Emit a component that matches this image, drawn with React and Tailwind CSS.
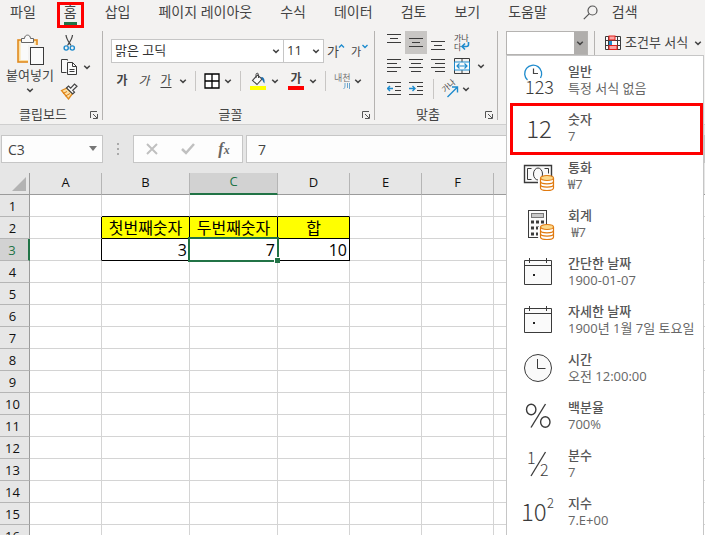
import { useState } from "react";

const TABS = ["파일", "홈", "삽입", "페이지 레이아웃", "수식", "데이터", "검토", "보기", "도움말"];

const COLUMNS = ["A", "B", "C", "D", "E", "F", "G", "H", "I"];
const ROWS = Array.from({ length: 16 }, (_, i) => i + 1);

const CELLS = {
  B2: "첫번째숫자",
  C2: "두번째숫자",
  D2: "합",
  B3: "3",
  C3: "7",
  D3: "10",
};

const FORMATS = [
  { name: "일반", sample: "특정 서식 없음", icon: GeneralIcon },
  { name: "숫자", sample: "7", icon: NumberIcon, marked: true },
  { name: "통화", sample: "₩7", icon: CurrencyIcon },
  { name: "회계", sample: "\u00a0₩7", icon: AccountingIcon },
  { name: "간단한 날짜", sample: "1900-01-07", icon: CalendarIcon },
  { name: "자세한 날짜", sample: "1900년 1월 7일 토요일", icon: CalendarIcon },
  { name: "시간", sample: "오전 12:00:00", icon: ClockIcon },
  { name: "백분율", sample: "700%", icon: PercentIcon },
  { name: "분수", sample: "7", icon: FractionIcon },
  { name: "지수", sample: "7.E+00", icon: ExponentIcon },
];

/* ---------- format menu icons ---------- */

function GeneralIcon() {
  return (
    <svg className="overflow-visible" width="32" height="32" viewBox="0 0 32 32" fill="none">
      <path d="M4.500 16A8.500 8.500 0 1 1 17.500 14" stroke="#1e8bcd" strokeWidth="1.300" />
      <path d="M10.500 4.500v5h4.500" stroke="#444" strokeWidth="1.200" />
      <text x="2" y="30" fontSize="18" fontWeight="300" fill="#3b3b3b">
        123
      </text>
    </svg>
  );
}

function NumberIcon() {
  return <span className="text-2xl font-light text-[#3b3b3b]">12</span>;
}

function Coins({ x, y }) {
  return (
    <g transform={`translate(${x} ${y})`}>
      <path d="M0 3v10c0 1.600 3 3 7 3s7-1.400 7-3V3" fill="#fff" stroke="#fff" strokeWidth="4" />
      <path
        d="M.5 3v10c0 1.600 3 2.500 6.500 2.500s6.500-.9 6.500-2.500V3"
        fill="#fff"
        stroke="#e07a10"
        strokeWidth="1.200"
      />
      <path
        d="M.5 6.500c0 1.500 3 2.300 6.500 2.300s6.500-.8 6.500-2.300M.5 9.800c0 1.500 3 2.300 6.500 2.300s6.500-.8 6.500-2.300"
        fill="none"
        stroke="#e07a10"
        strokeWidth="1.200"
      />
      <ellipse cx="7" cy="3" rx="6.500" ry="2.500" fill="#fbd98b" stroke="#e07a10" strokeWidth="1.200" />
    </g>
  );
}

function CurrencyIcon() {
  return (
    <svg width="32" height="32" viewBox="0 0 32 32" fill="none">
      <path d="M1.500 5.500h27v17h-27z" fill="#fafafa" stroke="#3b3b3b" strokeWidth="1.400" />
      <path d="M8.500 8.500h-4v11h4M21.500 8.500h4v5" stroke="#3b3b3b" />
      <ellipse cx="15" cy="14" rx="4.500" ry="6" stroke="#3b3b3b" />
      <Coins x="17" y="15" />
    </svg>
  );
}

function AccountingIcon() {
  return (
    <svg width="32" height="32" viewBox="0 0 32 32" fill="none">
      <rect x="5.500" y="2.500" width="18" height="27" fill="#fafafa" stroke="#3b3b3b" />
      <rect x="8.500" y="5.500" width="12" height="4" fill="#c8c8c8" stroke="#777" />
      <path
        d="M8 12.500h3v3H8zM13 12.500h3v3h-3zM18 12.500h3v3h-3zM8 18.500h3v3H8zM13 18.500h3v3h-3zM8 24.500h3v3H8zM13 24.500h3v3h-3z"
        fill="#3b3b3b"
      />
      <Coins x="17" y="16" />
    </svg>
  );
}

function CalendarIcon() {
  return (
    <svg width="32" height="32" viewBox="0 0 32 32" fill="none">
      <path d="M1.500 4.500h27v24h-27z" fill="#fafafa" stroke="#3b3b3b" />
      <path d="M1.500 9.500h27M6.500 2v5M23.500 2v5" stroke="#3b3b3b" />
      <rect x="10" y="18" width="2" height="2" fill="#222" />
    </svg>
  );
}

function ClockIcon() {
  return (
    <svg width="32" height="32" viewBox="0 0 32 32" fill="none">
      <circle cx="15" cy="16" r="13.500" fill="#fafafa" stroke="#3b3b3b" />
      <path d="M14.500 7v9.500h8" stroke="#3b3b3b" />
    </svg>
  );
}

function PercentIcon() {
  return (
    <svg width="32" height="32" viewBox="0 0 32 32" fill="none" stroke="#3b3b3b" strokeWidth="1.400">
      <ellipse cx="8.200" cy="9.500" rx="4.700" ry="5.200" />
      <ellipse cx="22.300" cy="22" rx="4.700" ry="5.200" />
      <path d="M22.500 4 8 27.500" />
    </svg>
  );
}

function FractionIcon() {
  return (
    <svg className="overflow-visible" width="32" height="32" viewBox="0 0 32 32" fill="none">
      <text x="4" y="16" fontSize="16" fontWeight="300" fill="#3b3b3b">
        1
      </text>
      <text x="17" y="28" fontSize="16" fontWeight="300" fill="#3b3b3b">
        2
      </text>
      <path d="M22.500 4 8 28" stroke="#3b3b3b" strokeWidth="1.300" />
    </svg>
  );
}

function ExponentIcon() {
  return (
    <svg className="overflow-visible" width="32" height="32" viewBox="0 0 32 32" fill="none">
      <text x="-2" y="25" fontSize="24" fontWeight="300" fill="#3b3b3b">
        10
      </text>
      <text x="24" y="12" fontSize="13" fontWeight="300" fill="#3b3b3b">
        2
      </text>
    </svg>
  );
}

/* ---------- ribbon icons ---------- */

function Chevron({ className = "" }) {
  return (
    <svg className={className} width="12" height="12" viewBox="0 0 12 12" fill="none">
      <path d="M3.200 4.800 6 7.400l2.800-2.600" stroke="#444" strokeWidth="1.500" />
    </svg>
  );
}

function Launcher() {
  return (
    <svg width="10" height="10" viewBox="0 0 10 10" fill="none" stroke="#555">
      <path d="M1.500 8V1.500H8M4 4l4 4M8.500 4v4.500H4" />
    </svg>
  );
}

function PasteIcon() {
  return (
    <svg width="28" height="32" viewBox="0 0 28 32" fill="none">
      <rect x="2" y="6" width="19" height="22" fill="#fbe0a6" stroke="#e08a1e" strokeWidth="1.600" />
      <rect x="4.500" y="8" width="14" height="18" fill="#fafafa" />
      <path d="M5.500 8.500v-4H8.500C8.500 0 14.500 0 14.500 4.500h3v4z" fill="#fafafa" stroke="#666" />
      <rect x="12" y="11" width="16" height="21" fill="#f3f2f1" />
      <rect x="14.500" y="13.500" width="13" height="17" fill="#fafafa" stroke="#3b3b3b" />
    </svg>
  );
}

function CutIcon() {
  return (
    <svg width="16" height="18" viewBox="0 0 16 18" fill="none">
      <path d="M5 1c.3 4 3 7.500 5 10.500M11.500 1c-.3 4-3 7.500-5 10.500" stroke="#444" strokeWidth="1.200" />
      <circle cx="5.200" cy="14" r="2.100" stroke="#1e8bcd" strokeWidth="1.400" />
      <circle cx="11.300" cy="14" r="2.100" stroke="#1e8bcd" strokeWidth="1.400" />
    </svg>
  );
}

function CopyIcon() {
  return (
    <svg width="18" height="18" viewBox="0 0 18 18" fill="none" stroke="#3b3b3b">
      <path d="M7.500 2.500V1.500h-6v13h5" fill="#fafafa" />
      <path d="M7.500 4.500h5l4 4v8h-9z" fill="#fafafa" />
      <path d="M12.500 4.500v4h4M9.500 11.500h5M9.500 13.500h5" />
    </svg>
  );
}

function BrushIcon() {
  return (
    <svg width="18" height="18" viewBox="0 0 18 18" fill="none">
      <path d="M1.500 8.500 7 6l5.500 5.500L8.500 17z" fill="#fbe0a6" stroke="#e08a1e" strokeWidth="1.300" />
      <path d="M3 11.500l4-2M5.500 14l4.500-2.500" stroke="#e07a10" />
      <path
        d="m6.500 6 2-2 2.200 2.200L14.500 2 17 4.300l-4.200 4 1.700 1.900-1.800 1.800z"
        fill="#fafafa"
        stroke="#444"
        strokeWidth="1.200"
      />
    </svg>
  );
}

function BordersIcon() {
  return (
    <svg width="16" height="16" viewBox="0 0 16 16" fill="none" stroke="#000">
      <path d="M1 1h14v14H1zM8 1v14M1 8h14" fill="#fff" strokeWidth="1.300" />
    </svg>
  );
}

function BucketIcon() {
  return (
    <svg width="16" height="18" viewBox="0 0 16 18" fill="none">
      <path d="m7.500 3-5 5.500L7 12.500l5-5.500-4.500-4Z" fill="#fafafa" stroke="#444" strokeWidth="1.100" />
      <path d="M6 6V2.500C6 .8 8.500.8 8.500 2.500V6" stroke="#444" />
      <path d="M11 5c2.500 0 4 1.500 3.500 6.500-1.500-1-1.500-3-2.500-4z" fill="#1e6fae" />
      <path d="M0 14h16v4H0z" fill="#ff0" />
    </svg>
  );
}

// Each entry is [x, width] of one text line, 4px apart.
function LinesIcon({ lines, top = 0 }) {
  return (
    <svg width="14" height="17" viewBox="0 0 14 17" fill="#3b3b3b">
      {lines.map(([x, width], i) => (
        <rect key={i} x={x} y={top + i * 4} width={width} height="1" />
      ))}
    </svg>
  );
}

function IndentIcon({ flip }) {
  return (
    <svg width="14" height="15" viewBox="0 0 14 15" fill="none">
      <path d="M0 1.500h14M8 5.500h6M8 9.500h6M0 13.500h14" stroke="#3b3b3b" />
      <path
        d={flip ? "M0 7.500h5.500M3.500 5l2.500 2.500L3.500 10" : "M6 7.500H.8M3 5 .5 7.500 3 10"}
        stroke="#1e8bcd"
        strokeWidth="1.400"
      />
    </svg>
  );
}

function WrapIcon() {
  return (
    <svg className="overflow-visible" width="18" height="18" viewBox="0 0 18 18" fill="none">
      <text x="1" y="7" fontSize="8" fill="#444">가나</text>
      <text x="1" y="16" fontSize="8" fill="#444">다</text>
      <path d="M15.500 8v2.500q0 2-2 2H9.500M12 9.500l-3 3 3 3" stroke="#1e8bcd" strokeWidth="1.600" />
    </svg>
  );
}

function MergeIcon() {
  return (
    <svg width="16" height="16" viewBox="0 0 16 16" fill="none">
      <path d="M.5.5h15v15H.5zM8 .5v4M8 11.500v4" stroke="#3b3b3b" />
      <rect x=".5" y="4" width="15" height="8" fill="#fafafa" stroke="#1e8bcd" />
      <path d="M3 8h10M5.500 5.500 3 8l2.500 2.500M10.500 5.500 13 8l-2.500 2.500" stroke="#1e8bcd" strokeWidth="1.200" />
    </svg>
  );
}

function OrientationIcon() {
  return (
    <svg className="overflow-visible" width="18" height="18" viewBox="0 0 18 18" fill="none">
      <text x="0" y="0" fontSize="8" fill="#444" transform="translate(4 13) rotate(-42)">
        가나
      </text>
      <path d="M6.500 17 16 7.500M11 7h5.500v5.500" stroke="#1e8bcd" strokeWidth="1.400" />
    </svg>
  );
}

function PhoneticIcon() {
  return (
    <svg className="overflow-visible" width="18" height="18" viewBox="0 0 18 18" fill="none">
      <text x="1" y="9" fontSize="9" fill="#777">내천</text>
      <path d="M12 11v3q0 2-1.500 3M14.500 11v5M16.500 11v6" stroke="#6aa7d0" />
    </svg>
  );
}

function ConditionalIcon() {
  return (
    <svg width="16" height="16" viewBox="0 0 16 16" fill="none">
      <path d="M.5 1.500h15v13H.5zM3.500 1.500v13M12.500 1.500v13M.5 5.500h15M.5 10.500h15" fill="#fafafa" stroke="#3b3b3b" />
      <rect x="4" y="1" width="6" height="4" fill="#f9a3a3" stroke="#e3201b" />
      <rect x="4" y="6" width="3" height="4" fill="#1e8bcd" />
      <rect x="4" y="10.500" width="8" height="4" fill="#f9a3a3" stroke="#e3201b" />
    </svg>
  );
}

function SizeIcon({ grow }) {
  return (
    <svg className="overflow-visible" width="18" height="18" viewBox="0 0 18 18" fill="none">
      <text x="0" y="14" fontSize={grow ? 13 : 11} fill="#444">가</text>
      <path d={grow ? "M12 5.500 14.500 3 17 5.500" : "M11.500 3 14 5.500 16.500 3"} stroke="#1e8bcd" strokeWidth="1.400" />
    </svg>
  );
}

/* ---------- ribbon pieces ---------- */

function IconButton({ label, className = "w-[22px]", children }) {
  return (
    <button type="button" aria-label={label} className={`flex h-full shrink-0 items-center justify-center ${className}`}>
      {children}
    </button>
  );
}

function Divider() {
  return <div className="mx-1.5 h-5 w-px bg-[#c8c6c4]" />;
}

function Group({ title, className = "", children }) {
  return (
    <>
      <section aria-label={title} className="flex shrink-0 flex-col">
        <div className={`flex-1 ${className}`}>{children}</div>
        <div className="flex h-[18px] items-center">
          <span className="flex-1 text-center">{title}</span>
          <IconButton label={`${title} 설정`} className="w-4">
            <Launcher />
          </IconButton>
        </div>
      </section>
      <div className="h-[89px] w-px shrink-0 bg-[#b5b3b1]" />
    </>
  );
}

function Select({ label, value, className }) {
  return (
    <div className={`relative h-6 shrink-0 ${className}`}>
      <select
        aria-label={label}
        defaultValue={value}
        className="h-full w-full appearance-none border border-[#c6c6c6] bg-white px-[3px] text-[#333]"
      >
        <option>{value}</option>
      </select>
      <Chevron className="pointer-events-none absolute top-1.5 right-0.5" />
    </div>
  );
}

function FormatMenu() {
  return (
    <ul className="absolute top-full left-0 w-[198px] border border-[#c6c6c6] bg-white">
      {FORMATS.map(({ name, sample, icon: Icon, marked }) => (
        <li key={name} className="relative">
          <button type="button" className="flex h-12 w-full items-center pl-4 text-left">
            <span className="flex w-8 justify-center font-['Noto_Sans_CJK_KR',sans-serif]">
              <Icon />
            </span>
            <span className="ml-[13px] flex flex-col leading-[17px] whitespace-nowrap text-[#666]">
              <span className="font-medium text-[#555]">{name}</span>
              <span>{sample}</span>
            </span>
          </button>
          {marked && (
            <div className="pointer-events-none absolute -top-px right-0 -bottom-[3px] left-[3px] border-3 border-[#f00]" />
          )}
        </li>
      ))}
    </ul>
  );
}

function Ribbon() {
  return (
    <div className="flex h-[94px] border-b border-[#cfcfcf]">
      <Group title="클립보드" className="flex pr-2 pl-1">
        <button type="button" className="flex w-[52px] flex-col items-center pt-[3px]">
          <PasteIcon />
          <span className="leading-[18px] whitespace-nowrap">붙여넣기</span>
          <Chevron />
        </button>
        <div className="flex flex-col pl-0.5">
          <div className="flex h-6">
            <IconButton label="잘라내기"><CutIcon /></IconButton>
          </div>
          <div className="flex h-6">
            <IconButton label="복사"><CopyIcon /></IconButton>
            <IconButton label="복사 옵션" className="w-3.5"><Chevron /></IconButton>
          </div>
          <div className="flex h-6">
            <IconButton label="서식 복사"><BrushIcon /></IconButton>
          </div>
        </div>
      </Group>

      <Group title="글꼴" className="flex flex-col gap-1.5 pt-2 pr-0.5 pl-2">
        <div className="flex h-6">
          <Select label="글꼴" value="맑은 고딕" className="w-[173px]" />
          <Select label="글꼴 크기" value="11" className="-ml-px w-[41px]" />
          <IconButton label="글꼴 크기 크게" className="w-6"><SizeIcon grow /></IconButton>
          <IconButton label="글꼴 크기 작게" className="w-6"><SizeIcon /></IconButton>
        </div>
        <div className="flex h-6 items-center text-xs">
          <IconButton label="굵게"><b>가</b></IconButton>
          <IconButton label="기울임꼴"><i>가</i></IconButton>
          <IconButton label="밑줄"><u className="underline-offset-2">가</u></IconButton>
          <IconButton label="밑줄 옵션" className="w-3"><Chevron /></IconButton>
          <Divider />
          <IconButton label="테두리" className="w-5"><BordersIcon /></IconButton>
          <IconButton label="테두리 옵션" className="w-3"><Chevron /></IconButton>
          <Divider />
          <IconButton label="채우기 색"><BucketIcon /></IconButton>
          <IconButton label="채우기 색 옵션" className="w-3"><Chevron /></IconButton>
          <IconButton label="글꼴 색" className="ml-1 w-[22px]">
            <span className="flex w-4 justify-center border-b-4 border-[#f00] leading-[14px] font-bold">가</span>
          </IconButton>
          <IconButton label="글꼴 색 옵션" className="w-3"><Chevron /></IconButton>
          <Divider />
          <IconButton label="윗주 필드" className="w-5"><PhoneticIcon /></IconButton>
          <IconButton label="윗주 옵션" className="w-3"><Chevron /></IconButton>
        </div>
      </Group>

      <Group title="맞춤" className="flex flex-col pr-2.5 pl-2">
        <div className="flex h-[23px]">
          <IconButton label="위쪽 맞춤"><LinesIcon lines={[[0, 14], [3, 8], [0, 14]]} /></IconButton>
          <IconButton label="가운데 맞춤" className="w-[22px] bg-[#c8c6c4]">
            <LinesIcon top={4} lines={[[0, 14], [3, 8], [0, 14]]} />
          </IconButton>
          <IconButton label="아래쪽 맞춤"><LinesIcon top={7} lines={[[0, 14], [3, 8], [0, 14]]} /></IconButton>
          <IconButton label="텍스트 줄 바꿈" className="w-[26px]"><WrapIcon /></IconButton>
        </div>
        <div className="flex h-[23px]">
          <IconButton label="왼쪽 맞춤"><LinesIcon top={2} lines={[[0, 14], [0, 10], [0, 14], [0, 10]]} /></IconButton>
          <IconButton label="가로 가운데 맞춤"><LinesIcon top={2} lines={[[0, 14], [2, 10], [0, 14], [2, 10]]} /></IconButton>
          <IconButton label="오른쪽 맞춤"><LinesIcon top={2} lines={[[0, 14], [4, 10], [0, 14], [4, 10]]} /></IconButton>
          <IconButton label="병합하고 가운데 맞춤" className="w-[26px]"><MergeIcon /></IconButton>
          <IconButton label="병합 옵션" className="w-3"><Chevron /></IconButton>
        </div>
        <div className="flex h-[23px] items-center">
          <IconButton label="내어쓰기"><IndentIcon /></IconButton>
          <IconButton label="들여쓰기"><IndentIcon flip /></IconButton>
          <Divider />
          <IconButton label="방향" className="w-5"><OrientationIcon /></IconButton>
          <IconButton label="방향 옵션" className="w-3"><Chevron /></IconButton>
        </div>
      </Group>

      <div className="flex h-6 shrink-0 pl-2">
        <div className="relative w-[82px]">
          <select
            aria-label="표시 형식"
            className="h-full w-full appearance-none border border-[#b5b3b1] bg-[linear-gradient(#b0aeac,#b0aeac)] bg-[length:13px_100%] bg-right bg-no-repeat"
          />
          <div className="pointer-events-none absolute inset-y-px right-3.5 left-px bg-white" />
          <Chevron className="pointer-events-none absolute top-1.5 right-0.5" />
          <FormatMenu />
        </div>
        <div className="mx-1.5 h-full w-px bg-[#b5b3b1]" />
        <button type="button" className="flex items-center gap-1 pl-1 whitespace-nowrap">
          <ConditionalIcon />
          조건부 서식
          <Chevron />
        </button>
      </div>
    </div>
  );
}

function FormulaBar({ cell, value, onChange }) {
  return (
    <div className="flex h-12 shrink-0 items-start pt-2.5 pl-px">
      <div className="relative h-7 w-[102px] shrink-0">
        <input
          aria-label="이름 상자"
          className="h-full w-full border border-[#c6c6c6] bg-[#fdfdfd] px-1.5 text-sm text-[#444]"
          defaultValue={cell}
        />
        <svg className="pointer-events-none absolute top-[11px] right-1.5" width="8" height="5" viewBox="0 0 8 5">
          <path d="M0 0h8L4 5z" fill="#777" />
        </svg>
      </div>
      <svg className="mx-3.5 my-2 shrink-0" width="2" height="12" viewBox="0 0 2 12" fill="#aaa">
        <path d="M0 0h2v2H0zM0 5h2v2H0zM0 10h2v2H0z" />
      </svg>
      <div className="flex h-7 w-[110px] shrink-0 items-center justify-around border border-[#c6c6c6] bg-[#fdfdfd]">
        <IconButton label="취소" className="w-6">
          <svg width="12" height="12" viewBox="0 0 12 12" stroke="#c0c0c0" strokeWidth="2">
            <path d="m1 1 10 10M11 1 1 11" />
          </svg>
        </IconButton>
        <IconButton label="입력" className="w-6">
          <svg width="14" height="12" viewBox="0 0 14 12" fill="none" stroke="#c0c0c0" strokeWidth="2.500">
            <path d="m1 6 4 4 8-9" />
          </svg>
        </IconButton>
        <IconButton label="함수 삽입" className="w-6">
          <span className="font-['Liberation_Serif',serif] text-base font-bold text-[#666] italic">
            f<span className="text-xs">x</span>
          </span>
        </IconButton>
      </div>
      <input
        aria-label="수식 입력줄"
        className="ml-[3px] h-7 min-w-0 flex-1 border border-[#c6c6c6] bg-[#fdfdfd] px-[11px] text-sm text-[#444]"
        value={value}
        onChange={(e) => onChange(e.target.value)}
      />
    </div>
  );
}

function borderFor(col, row) {
  const boxed = "BCD".includes(col) && (row === 2 || row === 3);
  const right = boxed || (col === "A" && (row === 2 || row === 3));
  const bottom = boxed || ("BCD".includes(col) && row === 1);
  return `${right ? "border-r-black" : "border-r-[#d4d4d4]"} ${bottom ? "border-b-black" : "border-b-[#d4d4d4]"}`;
}

function Sheet({ cells }) {
  return (
    <table className="w-[710px] table-fixed border-separate border-spacing-0 bg-white">
      <colgroup>
        <col className="w-[30px]" />
        {COLUMNS.map((col) => (
          <col key={col} className={col === "B" || col === "C" ? "w-[88px]" : "w-[72px]"} />
        ))}
      </colgroup>
      <thead>
        <tr className="h-[22px] bg-[#e6e6e6] text-[13px] leading-4">
          <th className="border-r border-b border-[#9b9b9b] p-0">
            <svg className="ml-auto mr-[3px]" width="14" height="14" viewBox="0 0 14 14">
              <path d="M14 0v14H0z" fill="#b3b3b3" />
            </svg>
          </th>
          {COLUMNS.map((col) => (
            <th
              key={col}
              scope="col"
              className={`border-r border-r-[#b5b5b5] p-0 pb-1 font-normal ${
                col === "C"
                  ? "border-b-2 border-b-[#217346] bg-[#d2d2d2] text-[#217346]"
                  : "border-b border-b-[#9b9b9b] text-[#111]"
              }`}
            >
              {col}
            </th>
          ))}
        </tr>
      </thead>
      <tbody>
        {ROWS.map((row) => (
          <tr key={row} className="h-[22px]">
            <th
              scope="row"
              className={`border-b border-b-[#b5b5b5] p-0 pr-1 text-[13px] leading-4 font-normal ${
                row === 3
                  ? "border-r-2 border-r-[#217346] bg-[#d2d2d2] text-[#217346]"
                  : "border-r border-r-[#9b9b9b] bg-[#e6e6e6] text-[#111]"
              }`}
            >
              {row}
            </th>
            {COLUMNS.map((col) => {
              const id = col + row;
              return (
                <td
                  key={id}
                  className={`relative border-r border-b p-0 px-0.5 text-base leading-5 whitespace-nowrap text-black ${borderFor(col, row)} ${
                    row === 2 && cells[id] ? "bg-[#ff0] text-center" : "text-right"
                  }`}
                >
                  {cells[id]}
                  {id === "C3" && (
                    <div className="pointer-events-none absolute -inset-0.5 z-1 border-2 border-[#217346]">
                      <div className="absolute -right-[3px] -bottom-[3px] size-1.5 border-t border-l border-white bg-[#217346]" />
                    </div>
                  )}
                </td>
              );
            })}
          </tr>
        ))}
      </tbody>
    </table>
  );
}

export default function App() {
  const [value, setValue] = useState("7");

  return (
    <div className="flex h-screen flex-col overflow-hidden bg-[#e6e6e6] font-['Open_Sans','Noto_Sans_CJK_KR',sans-serif] text-[13px] text-[#444]">
      <header className="relative z-10 bg-[#f3f2f1]">
        <nav className="flex h-[31px] items-start gap-7 pl-2.5 text-sm leading-6 whitespace-nowrap">
          {TABS.map((tab) => (
            <button key={tab} type="button" className="relative">
              {tab}
              {tab === "홈" && (
                <>
                  <span className="absolute inset-x-0 -bottom-px h-[3px] bg-[#217346]" />
                  <span className="pointer-events-none absolute -inset-x-[7px] top-0.5 h-[26px] border-3 border-[#f00]" />
                </>
              )}
            </button>
          ))}
          <button type="button" className="ml-2 flex items-center gap-3.5">
            <svg width="15" height="15" viewBox="0 0 15 15" fill="none" stroke="#555" strokeWidth="1.200">
              <circle cx="9.500" cy="5.500" r="4.500" />
              <path d="M6.300 8.700.8 14.200" />
            </svg>
            검색
          </button>
        </nav>
        <Ribbon />
      </header>
      <FormulaBar cell="C3" value={value} onChange={setValue} />
      <Sheet cells={{ ...CELLS, C3: value }} />
    </div>
  );
}
